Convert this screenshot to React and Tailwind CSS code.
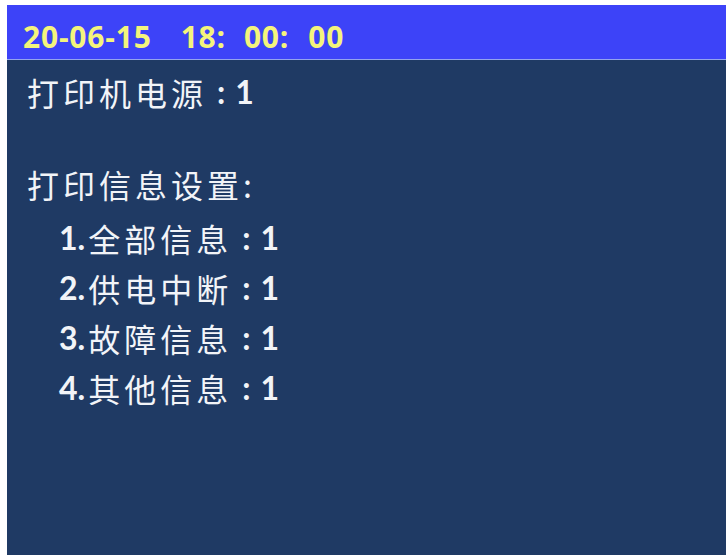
export default function App() {
  const items = [
    { n: "1.", label: "全部信息" },
    { n: "2.", label: "供电中断" },
    { n: "3.", label: "故障信息" },
    { n: "4.", label: "其他信息" },
  ];
  const cjk = { fontFamily: '"Noto Sans CJK SC", "Noto Sans", sans-serif' };
  const latin = { fontFamily: '"Open Sans", "Noto Sans", sans-serif' };
  const num = { fontFamily: 'Lato, "Open Sans", sans-serif' };

  const Value = () => (
    <span className="font-bold tracking-normal flex items-center" style={num}>
      <span className="ml-[10px]">:</span>
      <span className="ml-[10px]">1</span>
    </span>
  );

  return (
    <div className="w-[726px] h-[555px] bg-white pt-[5px] pl-[7px] overflow-hidden">
      <div className="w-full h-full bg-[#1f3a64] flex flex-col">
        <div className="h-[55px] bg-[#3d43f8] border-b border-[#94a4ee] flex items-center pl-4 pt-[9px]">
          <div
            className="flex text-[30px] font-bold text-[#f4f47c] tracking-[0.8px] leading-none"
            style={latin}
          >
            <span>20-06-15</span>
            <span className="ml-[29px]">18:</span>
            <span className="ml-[18px]">00:</span>
            <span className="ml-[19px]">00</span>
          </div>
        </div>

        <div className="pl-5 pt-[7px] text-[#f2f4f8]" style={cjk}>
          <div className="h-[50px] flex items-center text-[32px] tracking-[4px]">
            <span>打印机电源</span>
            <Value />
          </div>

          <div className="h-[50px] mt-[42px] flex items-center text-[32px] tracking-[4px]">
            <span>打印信息设置:</span>
          </div>

          <div className="pl-[32px] mt-[4px]">
            {items.map((it) => (
              <div key={it.n} className="h-[50px] flex items-center text-[32px] tracking-[4px]">
                <span className="font-bold tracking-normal mr-[3px]" style={num}>
                  {it.n}
                </span>
                <span>{it.label}</span>
                <Value />
              </div>
            ))}
          </div>
        </div>
      </div>
    </div>
  );
}
